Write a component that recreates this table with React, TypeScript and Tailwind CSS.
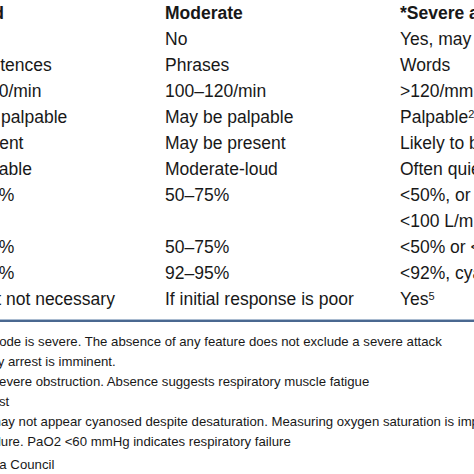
import React from 'react';

type Row = [React.ReactNode, React.ReactNode, React.ReactNode];

const Sup = ({ n }: { n: string }) => <sup className="text-[11px]">{n}</sup>;

const rows: Row[] = [
  ['No', 'No', 'Yes, may have paradoxical chest movement'],
  ['Sentences', 'Phrases', 'Words'],
  ['<100/min', '100–120/min', <>{'>120/mm'}<Sup n="1" /></>],
  ['Not palpable', 'May be palpable', <>Palpable<Sup n="2" /></>],
  ['Absent', 'May be present', 'Likely to be present'],
  ['Variable', 'Moderate-loud', 'Often quiet'],
  ['>75%', '50–75%', '<50%, or'],
  ['', '', <>{'<100 L/min'}<Sup n="3" /></>],
  ['>75%', '50–75%', <>{'<50% or <1 L'}<Sup n="4" /></>],
  ['>95%', '92–95%', '<92%, cyanosis may be present'],
  ['Test not necessary', 'If initial response is poor', <>Yes<Sup n="5" /></>],
];

const notes: { text: string; cls: string }[] = [
  { text: 'episode is severe. The absence of any feature does not exclude a severe attack', cls: 'ml-[-25px]' },
  { text: 'respiratory arrest is imminent.', cls: 'ml-[-58px]' },
  { text: 'palpable in severe obstruction. Absence suggests respiratory muscle fatigue', cls: 'ml-[-75px]' },
  { text: 'the test', cls: 'ml-[-34px]' },
  { text: 'may not appear cyanosed despite desaturation. Measuring oxygen saturation is important', cls: 'ml-[-10px]' },
  { text: 'failure. PaO2 <60 mmHg indicates respiratory failure', cls: 'ml-[-16px]' },
  { text: 'Asthma Council', cls: 'ml-[-38px] mt-[3px]' },
];

export default function App() {
  return (
    <div className="w-[474px] h-[474px] overflow-hidden bg-white text-[#181818] font-['Liberation_Sans',Arial,sans-serif]">
      <div className="ml-[-31px] grid grid-cols-[196px_235px_minmax(0,1fr)] text-[17.5px] leading-[26px] whitespace-nowrap">
        <div className="font-bold">Mild</div>
        <div className="font-bold">Moderate</div>
        <div className="font-bold">*Severe and life-threatening</div>
        {rows.map((r, i) => (
          <React.Fragment key={i}>
            <div className="h-[26px]">{r[0]}</div>
            <div className="h-[26px]">{r[1]}</div>
            <div className="h-[26px]">{r[2]}</div>
          </React.Fragment>
        ))}
      </div>

      <div className="mt-[7px] h-px bg-[#a9bbd0]" />
      <div className="h-[2px] bg-[#4a6890]" />

      <div className="pt-[10px] text-[13.2px] leading-[20px] whitespace-nowrap">
        {notes.map((n, i) => (
          <div key={i} className={n.cls}>
            {n.text}
          </div>
        ))}
      </div>
    </div>
  );
}
